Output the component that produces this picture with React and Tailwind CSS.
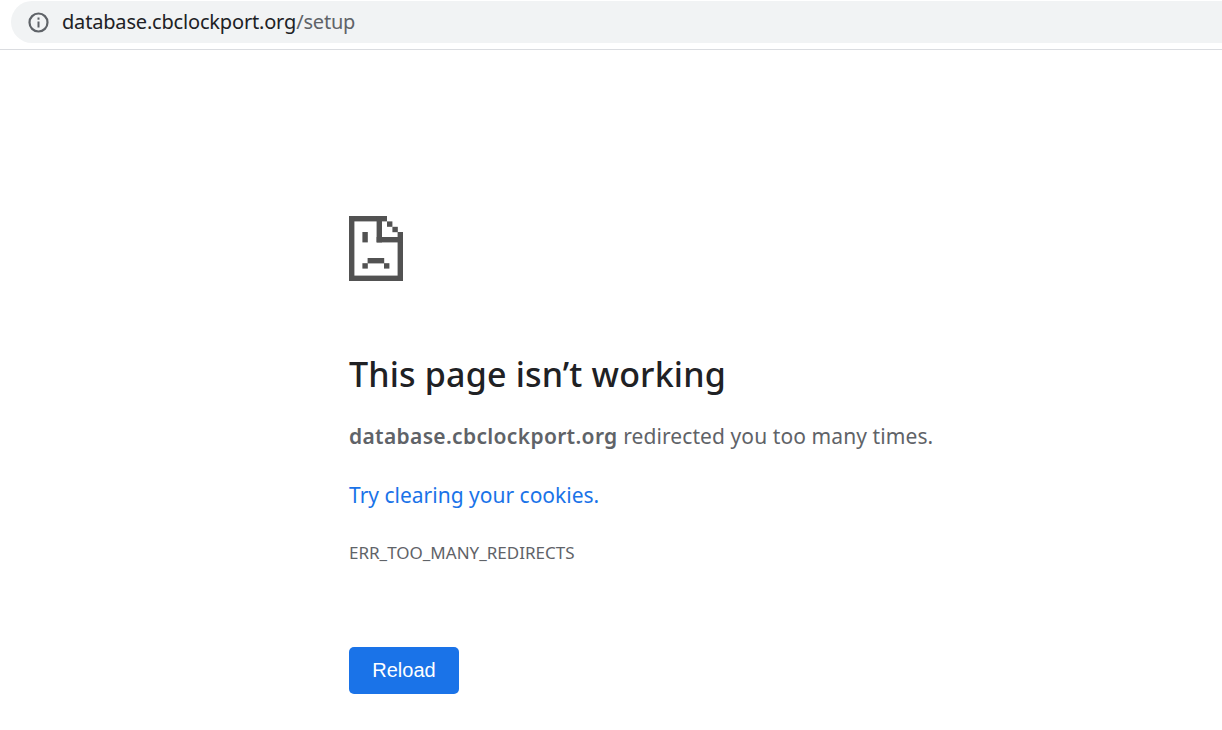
const SadPage = () => (
  <svg width="54" height="65" viewBox="0 0 54 65" fill="#525252">
    <rect x="0" y="0" width="38" height="5.4" />
    <rect x="0" y="0" width="5.4" height="65" />
    <rect x="0" y="59.6" width="54" height="5.4" />
    <rect x="48.6" y="16" width="5.4" height="49" />
    <rect x="27.6" y="0" width="5.4" height="26.4" />
    <rect x="27.6" y="21" width="26.4" height="5.4" />
    <rect x="38" y="5.4" width="5.4" height="5.4" />
    <rect x="43.4" y="10.8" width="5.4" height="5.4" />
    <rect x="13.4" y="16" width="5.4" height="10.4" />
    <rect x="18.6" y="42" width="16.6" height="5.4" />
    <rect x="13.4" y="47.2" width="5.4" height="5.4" />
    <rect x="35" y="47.2" width="5.4" height="5.4" />
  </svg>
);

const InfoIcon = () => (
  <svg width="21" height="21" viewBox="0 0 21 21" fill="none">
    <circle cx="10.5" cy="10.5" r="9" stroke="#5f6368" strokeWidth="2.2" />
    <rect x="9.5" y="9.5" width="2" height="6" fill="#5f6368" />
    <rect x="9.5" y="5.5" width="2" height="2.2" fill="#5f6368" />
  </svg>
);

export default function App() {
  return (
    <div className="min-h-screen bg-white font-['Noto_Sans',sans-serif]">
      {/* address bar */}
      <div className="h-[50px] border-b border-[#dadce0] pt-px pl-[11px]">
        <div className="flex h-[42px] items-center rounded-l-full bg-[#f1f3f4] pl-[17px] text-[20px] tracking-[-0.18px]">
          <InfoIcon />
          <span className="ml-[13px] text-[#202124]">database.cbclockport.org</span>
          <span className="text-[#5f6368]">/setup</span>
        </div>
      </div>

      {/* error page */}
      <div className="ml-[349px] flex flex-col items-start pt-[166px]">
        <SadPage />
        <h1 className="mt-[67px] text-[34px] leading-[52px] font-medium tracking-[0.17px] text-[#202124]">
          This page isn’t working
        </h1>
        <p className="mt-[16px] text-[21px] leading-[40px] tracking-[0.09px] text-[#5f6368]">
          <span className="font-semibold tracking-[0.33px]">database.cbclockport.org</span> redirected you too many times.
        </p>
        <a className="mt-[19px] text-[21px] leading-[40px] text-[#1a73e8]">Try clearing your cookies.</a>
        <div className="mt-[18px] text-[17px] leading-[40px] text-[#5f6368]">ERR_TOO_MANY_REDIRECTS</div>
        <button className="mt-[74px] h-[47px] w-[110px] rounded-[5px] bg-[#1a73e8] pb-px font-['Liberation_Sans',sans-serif] text-[20px] text-white">
          Reload
        </button>
      </div>
    </div>
  );
}
